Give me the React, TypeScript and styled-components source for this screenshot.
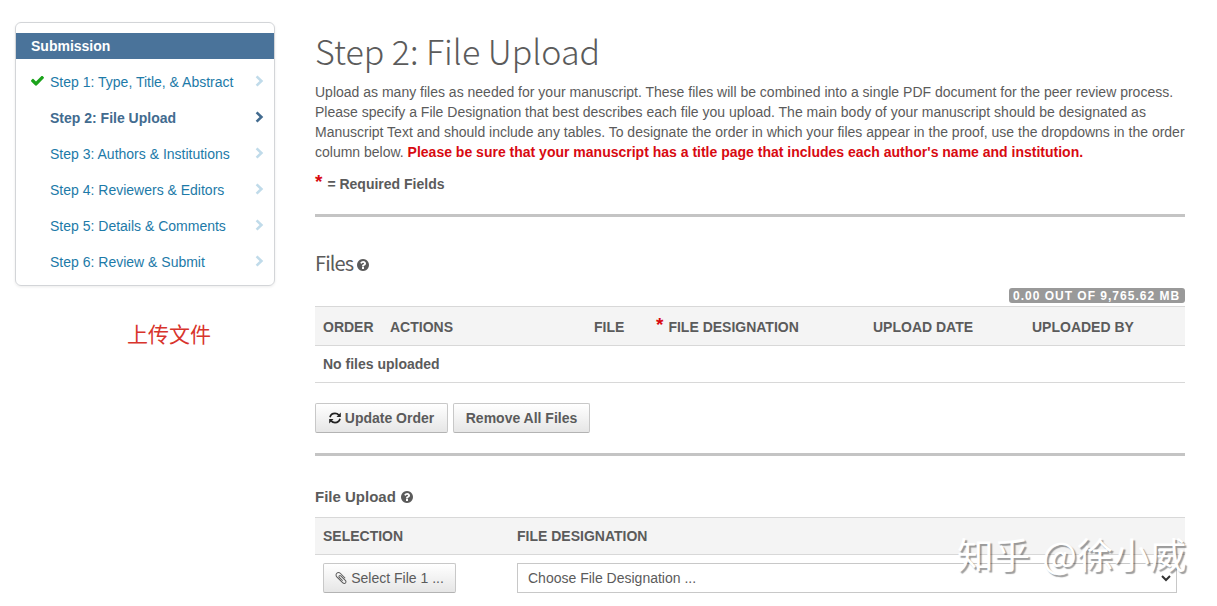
import styled, { createGlobalStyle } from "styled-components";

const GlobalStyle = createGlobalStyle`
    * {
        box-sizing: border-box;
    }

    body {
        margin: 0;
        height: 606px;
        overflow: hidden;
        background-color: #fff;
        color: #5b5b5b;
        font-family: "Liberation Sans", Arial, "Noto Sans CJK SC", sans-serif;
        font-size: 14px;
        line-height: 20px;
    }
`;

const PageStyled = styled.div`
    position: relative;
    display: flex;
    gap: 40px;
    width: 1217px;
    height: 606px;
    padding: 22px 32px 0 15px;
    overflow: hidden;
`;

const SidebarStyled = styled.aside`
    width: 260px;
    flex-shrink: 0;
`;

const StepsBoxStyled = styled.nav`
    height: 264px;
    padding-top: 10px;
    border: 1px solid #d3d5d8;
    border-radius: 6px;
    box-shadow: 0 1px 3px rgba(0, 0, 0, 0.08);

    h2 {
        margin: 0 0 5px;
        padding-left: 15px;
        background-color: #4a739a;
        color: #fff;
        font-size: 14px;
        line-height: 26px;
    }
`;

const StepStyled = styled.a<{ $active?: boolean }>`
    display: flex;
    align-items: center;
    height: 36px;
    padding: 0 10px 0 15px;
    color: ${props => props.$active ? '#426b8f' : '#1d7aa8'};
    font-weight: ${props => props.$active ? 700 : 400};

    .check {
        width: 19px;
        height: 10px;
        display: flex;
        margin-top: -3px;
        color: #1ba31b;
    }

    > span:nth-child(2) {
        flex: 1;
    }

    > svg {
        margin-top: -2px;
        color: ${props => props.$active ? '#426b8f' : '#c0dbea'};
    }
`;

const NoteStyled = styled.p`
    margin: 31px 0 0 112px;
    color: #d8342c;
    font-family: "Noto Sans CJK SC", sans-serif;
    font-size: 21px;
    line-height: 32px;
`;

const MainStyled = styled.main`
    width: 870px;

    h1 {
        margin: 4px 0 6px;
        font-family: "Noto Sans CJK SC", sans-serif;
        font-size: 34px;
        font-weight: 300;
        line-height: 50px;
    }
`;

const IntroStyled = styled.p`
    margin: 0 0 12px;

    strong {
        color: #d80a11;
    }
`;

const AsteriskStyled = styled.span`
    margin-right: 5px;
    color: #d80a11;
    font-size: 19px;
    font-weight: 700;
    line-height: 15px;
`;

const RequiredStyled = styled.div`
    display: flex;
    height: 20px;
    margin-bottom: 20px;
    font-weight: 700;
`;

const RuleStyled = styled.hr`
    height: 3px;
    margin: 0;
    border: 0;
    background-color: #c4c4c4;
`;

const FilesTitleStyled = styled.h2`
    display: flex;
    align-items: center;
    gap: 4px;
    margin: 30px 0 0;
    font-family: "Noto Sans CJK SC", sans-serif;
    font-size: 20px;
    font-weight: 400;
    line-height: 32px;
    letter-spacing: -0.9px;

    svg {
        margin-top: 3px;
    }
`;

const QuotaStyled = styled.div`
    width: 176px;
    height: 15px;
    margin: 9px 0 3px auto;
    padding-left: 4px;
    border-radius: 3px;
    background-color: #999;
    color: #fff;
    font-size: 12px;
    font-weight: 700;
    line-height: 16px;
    letter-spacing: 1px;
    white-space: nowrap;
`;

const HeadRowStyled = styled.div<{ $columns: string; $height: number }>`
    display: grid;
    grid-template-columns: ${props => props.$columns};
    align-items: center;
    height: ${props => props.$height}px;
    padding-left: 8px;
    border: solid #d8d8d8;
    border-width: 1px 0;
    background-color: #f4f4f4;
    font-weight: 700;
    text-transform: uppercase;
    white-space: nowrap;

    > span {
        display: flex;
    }
`;

const FilesHeadRowStyled = styled(HeadRowStyled)`
    padding-top: 1px;
`;

const EmptyRowStyled = styled.div`
    height: 37px;
    padding-left: 8px;
    border-bottom: 1px solid #d8d8d8;
    font-weight: 700;
    line-height: 36px;
`;

const ActionsStyled = styled.div`
    display: flex;
    gap: 5px;
    margin: 20px 0;
`;

const ButtonStyled = styled.button<{ $width: number; $bold?: boolean }>`
    display: flex;
    align-items: center;
    justify-content: center;
    gap: 4px;
    width: ${props => props.$width}px;
    height: 30px;
    padding: 0;
    border: 1px solid #c8c8c8;
    border-bottom-color: #b3b3b3;
    border-radius: 2px;
    background: linear-gradient(#fff, #e6e6e6);
    color: #5b5b5b;
    font: ${props => props.$bold ? 700 : 400} 14px/20px "Liberation Sans", Arial, sans-serif;
    white-space: nowrap;
`;

const UploadTitleStyled = styled.h3`
    display: flex;
    align-items: center;
    gap: 5px;
    margin: 31px 0 10px;
    font-size: 15px;
    line-height: 20px;
`;

const UploadRowStyled = styled.div`
    display: grid;
    grid-template-columns: 194px 660px;
    padding: 8px 8px 0;
`;

const SelectStyled = styled.div`
    display: flex;
    align-items: center;
    justify-content: space-between;
    height: 30px;
    padding: 0 5px 0 10px;
    border: 1px solid #c8c8c8;
    background-color: #fff;
`;

const WatermarkStyled = styled.div`
    position: absolute;
    left: 957px;
    top: 529px;
    color: #fff;
    font-family: "Noto Sans CJK SC", sans-serif;
    font-size: 36.5px;
    line-height: 50px;
    text-shadow: 2px 2px 1px rgba(0, 0, 0, 0.38);
    word-spacing: 4px;
    white-space: nowrap;
`;

const steps = [
    'Type, Title, & Abstract',
    'File Upload',
    'Authors & Institutions',
    'Reviewers & Editors',
    'Details & Comments',
    'Review & Submit',
];

const CheckIcon = () => (
    <svg width="13" height="10" viewBox="121 378 1550 1144" fill="currentColor">
        <path d="M1671 566q0 40-28 68l-724 724-136 136q-28 28-68 28t-68-28l-136-136-362-362q-28-28-28-68t28-68l136-136q28-28 68-28t68 28l294 295 656-657q28-28 68-28t68 28l136 136q28 28 28 68z" />
    </svg>
);

const ChevronIcon = () => (
    <svg width="9" height="12" viewBox="0 0 9 12" fill="none" stroke="currentColor" strokeWidth="2.6">
        <path d="M1.6 1.4L6.4 6L1.6 10.6" />
    </svg>
);

const HelpIcon = () => (
    <svg width="12" height="12" viewBox="128 128 1536 1536" fill="currentColor">
        <path d="M1024 1376v-192q0-14-9-23t-23-9h-192q-14 0-23 9t-9 23v192q0 14 9 23t23 9h192q14 0 23-9t9-23zm256-672q0-88-55.5-163t-138.5-116-170-41q-243 0-371 213-15 24 8 42l132 100q7 6 19 6 16 0 25-12 53-68 86-92 34-24 86-24 48 0 85.5 26t37.5 59q0 38-20 61t-68 45q-63 28-115.5 86.5t-52.5 125.5v36q0 14 9 23t23 9h192q14 0 23-9t9-23q0-19 21.5-49.5t54.5-49.5q32-18 49-28.5t46-35 44.5-48 28-60.5 12.5-81zm384 192q0 209-103 385.5t-279.5 279.5-385.5 103-385.5-103-279.5-279.5-103-385.5 103-385.5 279.5-279.5 385.5-103 385.5 103 279.5 279.5 103 385.5z" />
    </svg>
);

const RefreshIcon = () => (
    <svg width="12" height="12" viewBox="0 0 12 12" fill="#222">
        <path d="M1 5.2C1.6 2.8 3.6 1.4 6 1.4C7.6 1.4 8.9 2 9.9 3.1" fill="none" stroke="#222" strokeWidth="1.7" />
        <path d="M11.8 0.6V4.9H7.5z" />
        <path d="M11 6.8C10.4 9.2 8.4 10.6 6 10.6C4.4 10.6 3.1 10 2.1 8.9" fill="none" stroke="#222" strokeWidth="1.7" />
        <path d="M0.2 11.4V7.1H4.5z" />
    </svg>
);

const PaperclipIcon = () => (
    <svg width="12" height="12" viewBox="128 128 1536 1536" fill="currentColor">
        <path d="M1596 1385q0 117-79 196t-196 79q-135 0-235-100l-777-776q-113-115-113-271 0-159 110-270t269-111q158 0 273 113l605 606q10 10 10 22 0 16-30.5 46.5t-46.5 30.5q-13 0-23-10l-606-607q-79-77-181-77-106 0-179 75t-73 181q0 105 76 181l776 777q63 63 145 63 64 0 106-42t42-106q0-82-63-145l-581-581q-26-24-60-24-29 0-48 19t-19 48q0 32 25 59l410 410q10 10 10 22 0 16-31 47t-47 31q-12 0-22-10l-410-410q-63-61-63-149 0-82 57-139t139-57q88 0 149 63l581 581q100 98 100 235z" />
    </svg>
);

const App = () => {
    return (
        <PageStyled>
            <GlobalStyle />

            <SidebarStyled>
                <StepsBoxStyled>
                    <h2>Submission</h2>
                    {steps.map((step, i) => (
                        <StepStyled key={step} $active={i === 1}>
                            <span className="check">{i === 0 && <CheckIcon />}</span>
                            <span>Step {i + 1}: {step}</span>
                            <ChevronIcon />
                        </StepStyled>
                    ))}
                </StepsBoxStyled>
                <NoteStyled>上传文件</NoteStyled>
            </SidebarStyled>

            <MainStyled>
                <h1>Step 2: File Upload</h1>
                <IntroStyled>
                    Upload as many files as needed for your manuscript. These files will be combined into a single PDF document for the peer review process. Please specify a File Designation that best describes each file you upload. The main body of your manuscript should be designated as Manuscript Text and should include any tables. To designate the order in which your files appear in the proof, use the dropdowns in the order column below. <strong>Please be sure that your manuscript has a title page that includes each author's name and institution.</strong>
                </IntroStyled>
                <RequiredStyled><AsteriskStyled>*</AsteriskStyled>= Required Fields</RequiredStyled>
                <RuleStyled />

                <FilesTitleStyled>Files <HelpIcon /></FilesTitleStyled>
                <QuotaStyled>0.00 OUT OF 9,765.62 MB</QuotaStyled>
                <FilesHeadRowStyled $columns="67px 204px 62px 217px 159px 1fr" $height={40}>
                    <span>Order</span>
                    <span>Actions</span>
                    <span>File</span>
                    <span><AsteriskStyled>*</AsteriskStyled>File Designation</span>
                    <span>Upload Date</span>
                    <span>Uploaded By</span>
                </FilesHeadRowStyled>
                <EmptyRowStyled>No files uploaded</EmptyRowStyled>

                <ActionsStyled>
                    <ButtonStyled $width={133} $bold><RefreshIcon />Update Order</ButtonStyled>
                    <ButtonStyled $width={137} $bold>Remove All Files</ButtonStyled>
                </ActionsStyled>
                <RuleStyled />

                <UploadTitleStyled>File Upload <HelpIcon /></UploadTitleStyled>
                <HeadRowStyled $columns="194px 1fr" $height={38}>
                    <span>Selection</span>
                    <span>File Designation</span>
                </HeadRowStyled>
                <UploadRowStyled>
                    <ButtonStyled $width={133}><PaperclipIcon />Select File 1 ...</ButtonStyled>
                    <SelectStyled>
                        Choose File Designation ...
                        <svg width="10" height="8" viewBox="0 0 10 8" fill="none" stroke="#333" strokeWidth="2">
                            <path d="M1 2l4 4 4-4" />
                        </svg>
                    </SelectStyled>
                </UploadRowStyled>
            </MainStyled>

            <WatermarkStyled>知乎 @徐小威</WatermarkStyled>
        </PageStyled>
    );
};

export default App;
